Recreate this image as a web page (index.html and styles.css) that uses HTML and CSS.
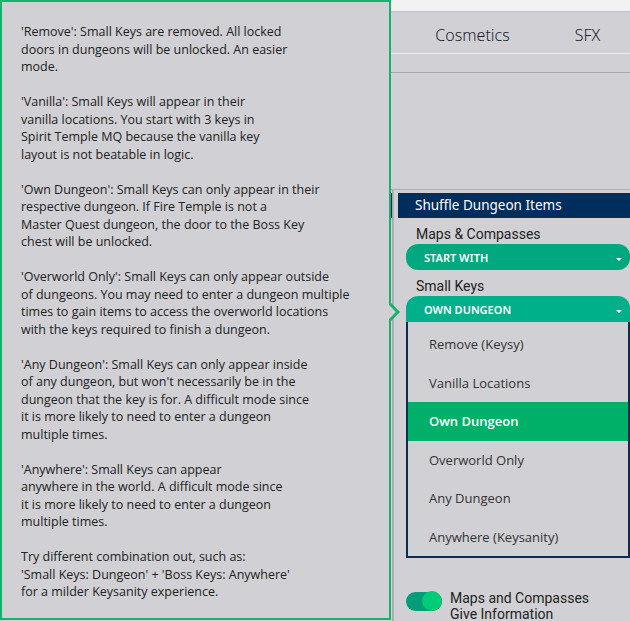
FILE: index.html
```html
<!DOCTYPE html>
<html lang="en">
<head>
  <meta charset="UTF-8">
  <meta name="viewport" content="width=device-width, initial-scale=1.0">
  <title>Randomizer Settings</title>
  <link rel="stylesheet" href="styles.css">
</head>
<body>
  <div class="topstrip"></div>

  <nav class="tabs">
    <span class="tab">Cosmetics</span>
    <span class="tab">SFX</span>
  </nav>
  <div class="subbar"></div>

  <main class="content">
    <div class="leftcol">
      <div class="leftcol-mark"></div>
    </div>

    <section class="panel">
      <div class="panel-title">Shuffle Dungeon Items</div>

      <label class="field-label">Maps &amp; Compasses</label>
      <div class="pill">
        <span>START WITH</span>
        <span class="caret"></span>
      </div>

      <label class="field-label">Small Keys</label>
      <div class="pill open">
        <span>OWN DUNGEON</span>
        <span class="caret"></span>
      </div>
      <ul class="listbox">
        <li>Remove (Keysy)</li>
        <li>Vanilla Locations</li>
        <li class="selected">Own Dungeon</li>
        <li>Overworld Only</li>
        <li>Any Dungeon</li>
        <li>Anywhere (Keysanity)</li>
      </ul>

      <div class="toggle-row">
        <span class="toggle"><span class="knob"></span></span>
        <span class="toggle-label">Maps and Compasses<br>Give Information</span>
      </div>
    </section>
  </main>

  <!-- tooltip for the Small Keys setting -->
  <div class="tooltip">
    <p>'Remove': Small Keys are removed. All locked<br>doors in dungeons will be unlocked. An easier<br>mode.</p>
    <p>'Vanilla': Small Keys will appear in their<br>vanilla locations. You start with 3 keys in<br>Spirit Temple MQ because the vanilla key<br>layout is not beatable in logic.</p>
    <p>'Own Dungeon': Small Keys can only appear in their<br>respective dungeon. If Fire Temple is not a<br>Master Quest dungeon, the door to the Boss Key<br>chest will be unlocked.</p>
    <p>'Overworld Only': Small Keys can only appear outside<br>of dungeons. You may need to enter a dungeon multiple<br>times to gain items to access the overworld locations<br>with the keys required to finish a dungeon.</p>
    <p>'Any Dungeon': Small Keys can only appear inside<br>of any dungeon, but won't necessarily be in the<br>dungeon that the key is for. A difficult mode since<br>it is more likely to need to enter a dungeon<br>multiple times.</p>
    <p>'Anywhere': Small Keys can appear<br>anywhere in the world. A difficult mode since<br>it is more likely to need to enter a dungeon<br>multiple times.</p>
    <p>Try different combination out, such as:<br>'Small Keys: Dungeon' + 'Boss Keys: Anywhere'<br>for a milder Keysanity experience.</p>
    <span class="tooltip-arrow"></span>
  </div>
</body>
</html>
```

FILE: styles.css
```css
body {
  margin: 0;
  width: 630px;
  height: 621px;
  overflow: hidden;
  background-color: #d1d0d5;
  font-family: "Open Sans", sans-serif;
  color: #222;
  position: relative;
}
.topstrip {
  height: 11px;
  background-color: #f2f2f2;
  border-bottom: 1px solid #c2c2c6;
}
.tabs {
  display: flex;
  height: 41px;
  padding-left: 415px;
  overflow: hidden;
  border-bottom: 1px solid #ececee;
}
.tab {
  flex: 0 0 115px;
  text-align: center;
  line-height: 47px;
  font-family: "Noto Sans", sans-serif;
  font-size: 16px;
  font-weight: 300;
  color: #1c1c2c;
}
.subbar {
  height: 18px;
  border-bottom: 1px solid #a9a9ad;
}
.content {
  display: flex;
  height: 431px;
  margin-top: 116px;
  border-top: 1px solid #b0b0b4;
}
.leftcol {
  flex: 0 0 392px;
  border-right: 1px solid #a9a9ad;
  padding-top: 3px;
}
.leftcol-mark {
  width: 2px;
  height: 25px;
  margin-left: 390px;
  background-color: #0d2a4d;
}
.panel {
  flex: 1;
  padding-top: 3px;
  padding-left: 4px;
  border-left: 1px solid #b4b4b8;
}
.panel-title {
  height: 25px;
  line-height: 24px;
  background-color: #002e5c;
  color: #fff;
  font-family: "Noto Sans", sans-serif;
  font-size: 13.5px;
  padding-left: 17px;
}
.field-label {
  display: block;
  font-family: Roboto, sans-serif;
  font-size: 14px;
  color: #222;
  padding-left: 18px;
  margin-top: 7px;
  line-height: 19px;
}
.pill {
  display: flex;
  align-items: center;
  justify-content: space-between;
  margin-left: 8px;
  height: 26px;
  padding: 0 8px 0 18px;
  border-radius: 12px;
  background-color: #00a87f;
  color: #fff;
  font-family: "Noto Sans", sans-serif;
  font-size: 11px;
  font-weight: 600;
}
.pill.open {
  background-color: #00b08a;
  border-radius: 12px 12px 0 0;
}
.caret {
  width: 0;
  height: 0;
  border-left: 3px solid transparent;
  border-right: 3px solid transparent;
  border-top: 3px solid #fff;
  margin-top: 4px;
}
.listbox {
  list-style: none;
  margin: 0 0 0 8px;
  padding: 3px 0 0;
  border: 2px solid #0b2d55;
  border-top: 0;
  font-family: "Open Sans", sans-serif;
  font-size: 13px;
  color: #333;
}
.listbox li {
  height: 38.5px;
  line-height: 38.5px;
  padding-left: 21px;
}
.listbox .selected {
  background-color: #00b068;
  color: #fff;
  font-weight: 600;
}
.toggle-row {
  display: flex;
  align-items: flex-start;
  margin: 32px 0 0 8px;
}
.toggle {
  position: relative;
  width: 36px;
  height: 19px;
  margin-top: 2px;
  border-radius: 10px;
  background-color: #009d78;
}
.knob {
  position: absolute;
  right: 0;
  top: -1px;
  width: 20px;
  height: 20px;
  border-radius: 50%;
  background-color: #00cb76;
}
.toggle-label {
  margin-left: 8px;
  font-family: Roboto, sans-serif;
  font-size: 14px;
  line-height: 16px;
  color: #222;
}
.tooltip {
  position: absolute;
  left: 0;
  top: 0;
  box-sizing: border-box;
  width: 391px;
  height: 620px;
  padding: 21px 19px 0 19px;
  border: 2px solid #12b46c;
  background-color: #d1d0d5;
  font-family: "Open Sans", sans-serif;
  font-size: 12.5px;
  line-height: 17.5px;
  color: #222;
}
.tooltip p {
  margin: 0 0 17.5px;
  white-space: nowrap;
}
.tooltip-arrow {
  position: absolute;
  right: -11px;
  top: 300px;
  width: 0;
  height: 0;
  border-top: 10px solid transparent;
  border-bottom: 10px solid transparent;
  border-left: 10px solid #12b46c;
}
.tooltip-arrow::after {
  content: "";
  position: absolute;
  left: -13px;
  top: -9px;
  border-top: 9px solid transparent;
  border-bottom: 9px solid transparent;
  border-left: 9px solid #d1d0d5;
}
```
